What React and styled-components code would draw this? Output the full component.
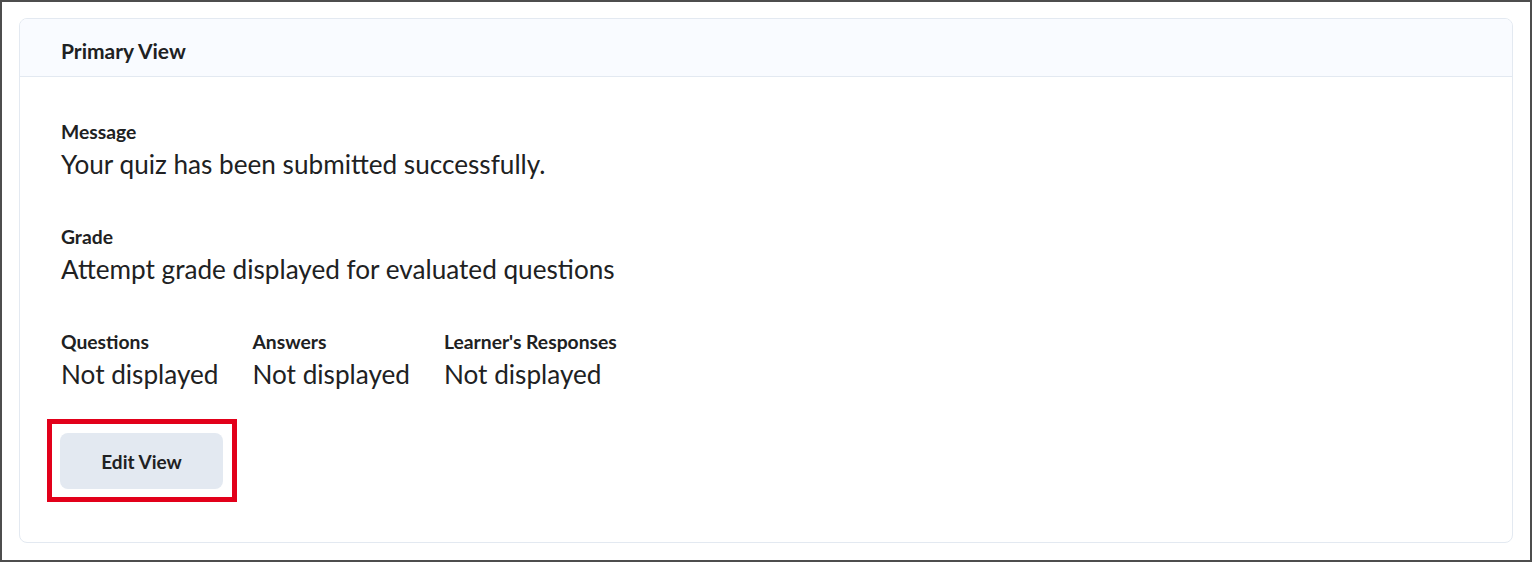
import React from "react";
import styled, { createGlobalStyle } from "styled-components";

const GlobalStyle = createGlobalStyle`
  html, body {
    margin: 0;
    padding: 0;
    background: #ffffff;
  }
  body {
    font-family: Lato, "Noto Sans", sans-serif;
    color: #202122;
  }
`;

const fields = [
  { label: "Questions", value: "Not displayed" },
  { label: "Answers", value: "Not displayed" },
  { label: "Learner's Responses", value: "Not displayed" },
];

export default function App() {
  return (
    <>
      <GlobalStyle />
      <Frame>
        <Card>
          <CardHeader>
            <HeaderTitle>Primary View</HeaderTitle>
          </CardHeader>
          <CardBody>
            <Field>
              <Label>Message</Label>
              <Value>Your quiz has been submitted successfully.</Value>
            </Field>
            <Field>
              <Label>Grade</Label>
              <Value>Attempt grade displayed for evaluated questions</Value>
            </Field>
            <FieldRow>
              {fields.map((f) => (
                <Field key={f.label}>
                  <Label>{f.label}</Label>
                  <Value>{f.value}</Value>
                </Field>
              ))}
            </FieldRow>
            <Highlight>
              <EditButton>Edit View</EditButton>
            </Highlight>
          </CardBody>
        </Card>
      </Frame>
    </>
  );
}

const Frame = styled.div`
  box-sizing: border-box;
  width: 1532px;
  height: 562px;
  border: 2px solid #4d4d4d;
  padding: 16px 17px 17px 17px;
  display: flex;
`;

const Card = styled.div`
  flex: 1;
  display: flex;
  flex-direction: column;
  border: 1px solid #e3e9f1;
  border-radius: 8px;
  overflow: hidden;
  background: #ffffff;
`;

const CardHeader = styled.div`
  box-sizing: border-box;
  height: 58px;
  padding: 19px 41px 0 41px;
  background: #f9fbff;
  border-bottom: 1px solid #e3e9f1;
`;

const HeaderTitle = styled.h2`
  margin: 0;
  font-size: 21px;
  font-weight: 700;
  line-height: 26px;
`;

const CardBody = styled.div`
  display: flex;
  flex-direction: column;
  align-items: flex-start;
  gap: 44px;
  padding: 43px 41px 40px 41px;
`;

const Field = styled.div`
  display: flex;
  flex-direction: column;
  gap: 3px;
`;

const FieldRow = styled.div`
  display: flex;
  gap: 34px;
`;

const Label = styled.div`
  font-size: 19.3px;
  font-weight: 700;
  line-height: 24px;
`;

const Value = styled.div`
  font-size: 26.15px;
  font-weight: 400;
  line-height: 34px;
`;

const Highlight = styled.div`
  margin-top: -16px;
  margin-left: -14px;
  padding: 9px 9px 8px 8px;
  border: 5px solid #e2001a;
`;

const EditButton = styled.button`
  width: 163px;
  height: 56px;
  border: none;
  border-radius: 8px;
  background: #e3e9f1;
  color: #202122;
  font-family: Lato, "Noto Sans", sans-serif;
  font-size: 19px;
  font-weight: 700;
  cursor: pointer;
`;
